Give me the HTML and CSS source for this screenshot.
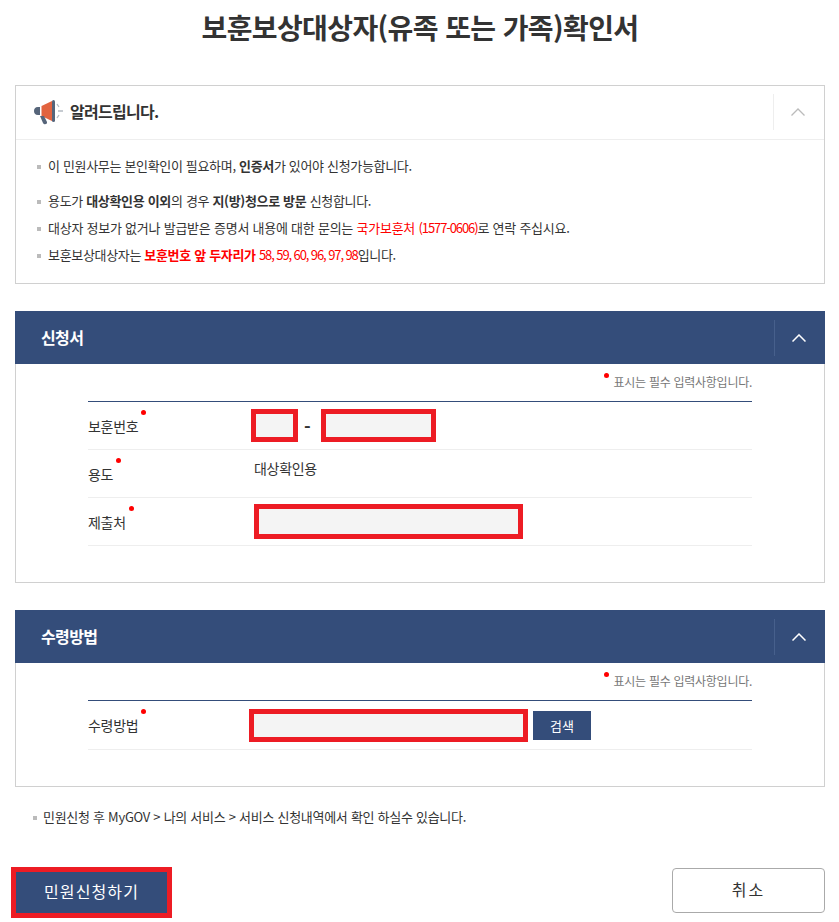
FILE: index.html
```html
<!DOCTYPE html>
<html lang="ko">
<head>
  <meta charset="UTF-8" />
  <meta name="viewport" content="width=device-width, initial-scale=1.0" />
  <title>보훈보상대상자(유족 또는 가족)확인서</title>
  <link rel="stylesheet" href="styles.css">
</head>
<body>
  <h1>보훈보상대상자(유족 또는 가족)확인서</h1>

  <!-- 알려드립니다 -->
  <div class="notice">
    <div class="notice-head">
      <svg class="notice-icon" width="29" height="25" viewBox="0 0 29 25">
        <path d="M7.500 6 L18 1 V21 L7.500 16 Z" fill="#e2633f" />
        <path d="M6 7 V15 H4 C1 15 0 13 0 11 C0 9 1 7 4 7 Z" fill="#56657a" />
        <path d="M6 16 H10 L13 22 C13.500 24.500 10 25 9 23 Z" fill="#56657a" />
        <rect x="18" y="0" width="3" height="22" rx="1.500" fill="#56657a" />
        <path d="M23 4 L25 7 M24 11 H29 M23 18 L25 15" stroke="#b4bac2" stroke-width="1.300" fill="none" />
      </svg>
      <strong class="notice-title">알려드립니다.</strong>
      <span class="toggle">
        <svg width="14" height="8" viewBox="0 0 14 8"><path d="M0.500 7.500 L7 1 L13.500 7.500" stroke="#bbb" stroke-width="1.300" fill="none" /></svg>
      </span>
    </div>
    <ul class="notice-list">
      <li class="first">이 민원사무는 본인확인이 필요하며, <b>인증서</b>가 있어야 신청가능합니다.</li>
      <li>용도가 <b>대상확인용 이외</b>의 경우 <b>지(방)청으로 방문</b> 신청합니다.</li>
      <li class="wide">대상자 정보가 없거나 발급받은 증명서 내용에 대한 문의는 <span class="red">국가보훈처 <span class="num">(1577-0606)</span></span>로 연락 주십시요.</li>
      <li>보훈보상대상자는 <span class="red"><b>보훈번호 앞 두자리가</b> <span class="num">58, 59, 60, 96, 97, 98</span></span>입니다.</li>
    </ul>
  </div>

  <!-- 신청서 -->
  <div class="panel">
    <div class="panel-head">
      <h2>신청서</h2>
      <span class="toggle">
        <svg width="14" height="8" viewBox="0 0 14 8"><path d="M0.500 7.500 L7 1 L13.500 7.500" stroke="#fff" stroke-width="1.500" fill="none" /></svg>
      </span>
    </div>
    <div class="panel-body">
      <p class="req-note"><i class="dot"></i>표시는 필수 입력사항입니다.</p>
      <div class="rows">
        <div class="row">
          <label>보훈번호<i class="dot"></i></label>
          <div class="field">
            <input type="text" class="input-a" />
            <span class="dash">-</span>
            <input type="text" class="input-b" />
          </div>
        </div>
        <div class="row">
          <label>용도<i class="dot"></i></label>
          <div class="field value">대상확인용</div>
        </div>
        <div class="row">
          <label>제출처<i class="dot"></i></label>
          <div class="field"><input type="text" class="input-c" /></div>
        </div>
      </div>
    </div>
  </div>

  <!-- 수령방법 -->
  <div class="panel">
    <div class="panel-head">
      <h2>수령방법</h2>
      <span class="toggle">
        <svg width="14" height="8" viewBox="0 0 14 8"><path d="M0.500 7.500 L7 1 L13.500 7.500" stroke="#fff" stroke-width="1.500" fill="none" /></svg>
      </span>
    </div>
    <div class="panel-body">
      <p class="req-note"><i class="dot"></i>표시는 필수 입력사항입니다.</p>
      <div class="rows">
        <div class="row row-tall">
          <label>수령방법<i class="dot"></i></label>
          <div class="field">
            <input type="text" class="input-d" />
            <button class="btn-search">검색</button>
          </div>
        </div>
      </div>
    </div>
  </div>

  <p class="foot-note">민원신청 후 MyGOV &gt; 나의 서비스 &gt; 서비스 신청내역에서 확인 하실수 있습니다.</p>

  <div class="actions">
    <button class="btn-apply">민원신청하기</button>
    <button class="btn-cancel">취소</button>
  </div>
</body>
</html>
```

FILE: styles.css
```css
:root {
  --navy: #344d7a;
  --text: #333;
  --border: #d0d0d0;
  --line: #eee;
  --red: #f00;
  --mark: #ed1c24;
}

* {
  box-sizing: border-box;
}

body {
  margin: 0;
  padding: 0 14px 0 15px;
  font-family: "Noto Sans CJK KR", "Noto Sans", sans-serif;
  font-size: 13px;
  color: var(--text);
  background: #fff;
}

h1 {
  margin: 0;
  height: 85px;
  padding-top: 6px;
  text-align: center;
  font-size: 28px;
  line-height: 42px;
  font-weight: 700;
  letter-spacing: -0.6px;
}

.notice {
  height: 199px;
  border: 1px solid var(--border);
}

.notice-head {
  display: flex;
  align-items: center;
  height: 54px;
  padding-left: 18px;
  border-bottom: 1px solid var(--line);
}

.notice-title {
  margin-left: 7px;
  padding-bottom: 3px;
  font-size: 16px;
  letter-spacing: -0.7px;
}

.toggle {
  display: flex;
  align-items: center;
  justify-content: center;
  width: 51px;
  height: 36px;
  margin-left: auto;
  padding-right: 3px;
  border-left: 1px solid var(--line);
}

.notice .toggle {
  margin-top: -1px;
}

.panel-head .toggle {
  border-left-color: #47608c;
}

.notice-list {
  list-style: none;
  margin: 0;
  padding: 13px 0 0 21px;
  letter-spacing: -0.33px;
}

.notice-list li {
  height: 27px;
  padding-left: 11px;
  line-height: 26px;
}

.notice-list li.first {
  height: 35px;
}

.notice-list li.wide {
  letter-spacing: -0.24px;
}

.notice-list li::before,
.foot-note::before {
  content: "";
  display: inline-block;
  width: 4px;
  height: 4px;
  margin-right: 7px;
  margin-left: -11px;
  background: #bbb;
  vertical-align: middle;
}

b {
  font-weight: 700;
}

.red {
  color: var(--red);
}

.num {
  letter-spacing: -1.1px;
}

.panel {
  margin-top: 27px;
  border: 1px solid var(--border);
  border-top: 0;
}

.panel-head {
  display: flex;
  align-items: center;
  height: 53px;
  margin: 0 -1px;
  padding-left: 26px;
  background: var(--navy);
  color: #fff;
}

.panel-head h2 {
  margin: 0;
  padding-bottom: 2px;
  font-size: 16px;
  font-weight: 700;
  letter-spacing: -0.6px;
}

.panel-body {
  padding: 0 72px 36px;
}

.req-note {
  margin: 0;
  height: 37px;
  padding-top: 8px;
  text-align: right;
  font-size: 12px;
  line-height: 20px;
  color: #777;
  letter-spacing: -0.27px;
}

.dot {
  display: inline-block;
  position: relative;
  top: -8px;
  width: 5px;
  height: 5px;
  border-radius: 50%;
  background: var(--red);
  vertical-align: 9px;
}

.req-note .dot {
  top: -3px;
  margin-right: 5px;
  vertical-align: 6px;
}

label .dot {
  margin-left: 3px;
}

.rows {
  border-top: 1px solid var(--navy);
}

.row {
  display: grid;
  grid-template-columns: 161px 1fr;
  align-items: center;
  height: 48px;
  border-bottom: 1px solid var(--line);
  letter-spacing: -0.3px;
}

.row-tall {
  height: 49px;
}

label {
  font-size: 14px;
}

.field {
  display: flex;
  align-items: center;
}

.value {
  margin-top: -11px;
  padding-left: 5px;
  font-size: 14px;
}

input {
  height: 33px;
  padding: 0 6px;
  background: #f4f4f4;
  border: 5px solid var(--mark);
}

.input-a {
  width: 47px;
  margin-left: 2px;
}

.dash {
  width: 23px;
  padding-left: 6px;
  font-weight: 700;
  font-size: 18px;
  line-height: 24px;
}

.input-b {
  width: 115px;
}

.input-c {
  width: 269px;
  height: 35px;
  margin-left: 5px;
}

.input-d {
  width: 279px;
}

.btn-search {
  width: 58px;
  height: 29px;
  margin-left: 5px;
  border: 0;
  background: var(--navy);
  color: #fff;
  font-family: inherit;
  font-size: 13px;
}

.foot-note {
  margin: 0;
  padding: 20px 0 0 18px;
  height: 80px;
  letter-spacing: -0.28px;
  line-height: 20px;
}

.foot-note::before {
  margin-left: 0;
  margin-right: 6px;
}

.actions {
  display: flex;
  justify-content: space-between;
  align-items: flex-start;
  padding-left: 1px;
  margin-left: -5px;
}

.btn-apply {
  width: 161px;
  height: 51px;
  padding-bottom: 4px;
  border: 5px solid var(--mark);
  background: var(--navy);
  color: #fff;
  font-family: inherit;
  font-size: 16px;
  letter-spacing: 1.1px;
}

.btn-cancel {
  width: 153px;
  height: 45px;
  margin-top: 1px;
  padding-bottom: 4px;
  border: 1px solid #aaa;
  border-radius: 4px;
  background: #fff;
  color: var(--text);
  font-family: inherit;
  font-size: 16px;
  letter-spacing: 2px;
}
```
